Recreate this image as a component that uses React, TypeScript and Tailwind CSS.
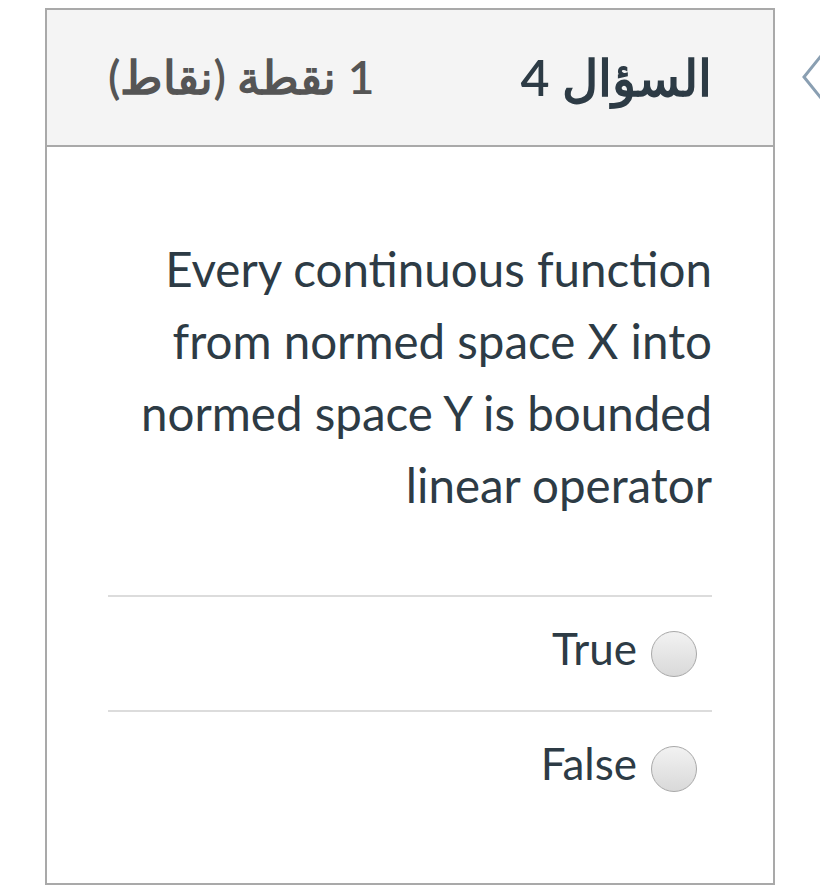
import React from "react";

const OPTIONS = ["True", "False"];

function Radio() {
  return (
    <span className="inline-block h-[46px] w-[46px] shrink-0 rounded-full border border-[#a8a8a8] bg-gradient-to-b from-[#f2f2f2] to-[#d9d9d9]" />
  );
}

export default function App() {
  return (
    <div className="relative min-h-screen bg-white pl-[45px] pt-[8px] font-['Lato','Noto_Sans',sans-serif]">
      {/* previous-question chevron peeking at the edge */}
      <svg
        className="absolute left-[800px] top-[52px]"
        width="30"
        height="50"
        viewBox="0 0 30 50"
        fill="none"
      >
        <path d="M21 4 L4 25 L21 46" stroke="#8a9fb2" strokeWidth="3" />
      </svg>

      <div className="flex h-[877px] w-[730px] flex-col border-2 border-[#a9a9a9]">
        <div
          dir="rtl"
          className="flex h-[137px] shrink-0 items-center justify-between border-b-2 border-[#a9a9a9] bg-[#f4f4f4] px-[61px] pb-[2px]"
        >
          <h2 className="text-[50px] font-semibold leading-none text-[#2d3b45]">السؤال 4</h2>
          <span className="text-[46px] font-semibold leading-none text-[#555]">1 نقطة (نقاط)</span>
        </div>

        <div className="flex flex-1 flex-col px-[61px] pt-[86px]">
          <p className="text-right text-[47.5px] leading-[72px] text-[#2d3b45]">
            Every continuous function
            <br />
            from normed space X into
            <br />
            normed space Y is bounded
            <br />
            linear operator
          </p>

          <div className="mt-[74px]">
            {OPTIONS.map((o) => (
              <div
                key={o}
                className="flex h-[115px] items-center justify-end gap-[14px] border-t-2 border-[#dcdcdc] pr-[15px]"
              >
                <span className="pb-[12px] text-[44px] leading-none text-[#2d3b45]">{o}</span>
                <Radio />
              </div>
            ))}
          </div>
        </div>
      </div>
    </div>
  );
}
